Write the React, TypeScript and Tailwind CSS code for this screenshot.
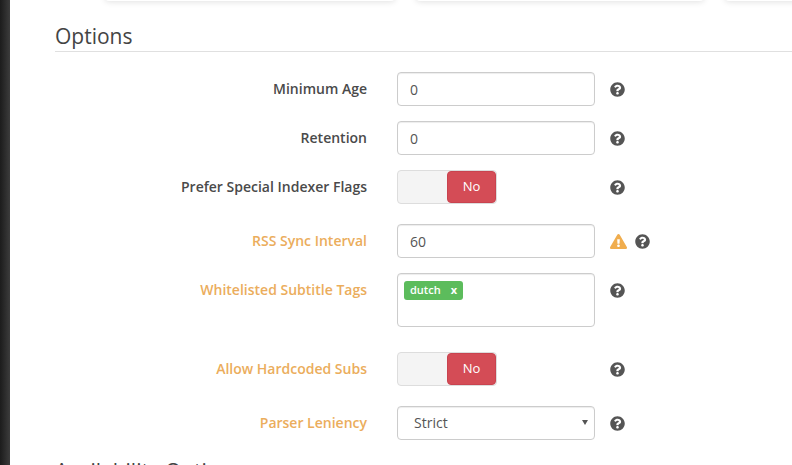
import type { ReactNode } from "react";
import { FaExclamationTriangle, FaQuestionCircle } from "react-icons/fa";

function Help() {
  return <FaQuestionCircle className="text-[15px] text-[#555]" />;
}

function Row({
  label,
  advanced,
  className,
  children,
  warning,
}: {
  label: string;
  advanced?: boolean;
  className?: string;
  children: ReactNode;
  warning?: boolean;
}) {
  return (
    <div className={`flex items-start ${className ?? ""}`}>
      <label
        className={`w-[312px] shrink-0 pt-[7px] text-right text-[14px] leading-[20px] font-[590] ${
          advanced ? "text-[#ebad5c]" : "text-[#4a4a4a]"
        }`}
      >
        {label}
      </label>
      <div className="ml-[30px] w-[198px] shrink-0">{children}</div>
      <div className="ml-[15px] flex h-[34px] items-center gap-[8px]">
        {warning && <FaExclamationTriangle className="text-[17px] text-[#f0ad4e]" />}
        <Help />
      </div>
    </div>
  );
}

function TextBox({ value }: { value: string }) {
  return (
    <div className="h-[34px] rounded-[4px] border border-[#ccc] bg-white px-3 pt-[7px] text-[14px] leading-[20px] text-[#555] shadow-[inset_0_1px_1px_rgba(0,0,0,0.075)]">
      {value}
    </div>
  );
}

function Toggle() {
  return (
    <div className="flex h-[34px] w-[100px] rounded-[4px] border border-[#ddd] bg-[#f4f4f4]">
      <div className="w-[49px]" />
      <div className="-my-px flex h-[32px] w-[49px] translate-y-px items-center justify-center rounded-[4px] border border-[#c9434f] bg-[#d44c56] pb-px text-[13px] text-white">
        No
      </div>
    </div>
  );
}

export default function App() {
  return (
    <div className="flex h-[465px] w-[792px] overflow-hidden bg-white font-['Open_Sans',sans-serif]">
      <div className="h-full w-[10px] shrink-0 bg-gradient-to-r from-[#1c1c1c] to-[#3c3c3c]" />
      <main className="min-w-0 flex-1 pl-[45px]">
        <div className="-mt-[10px] ml-[50px] flex gap-[21px]">
          <div className="h-[11px] w-[290px] shrink-0 rounded-[4px] bg-white shadow-[0_1px_6px_rgba(0,0,0,0.12)]" />
          <div className="h-[11px] w-[288px] shrink-0 rounded-[4px] bg-white shadow-[0_1px_6px_rgba(0,0,0,0.12)]" />
          <div className="h-[11px] w-[100px] shrink-0 rounded-[4px] bg-white shadow-[0_1px_6px_rgba(0,0,0,0.12)]" />
        </div>
        <h2 className="mt-[20px] h-[31px] border-b border-[#e0e0e0] text-[21px] leading-[30px] text-[#444]">
          Options
        </h2>
        <Row label="Minimum Age" className="mt-[20px]">
          <TextBox value="0" />
        </Row>
        <Row label="Retention" className="mt-[15px]">
          <TextBox value="0" />
        </Row>
        <Row label="Prefer Special Indexer Flags" className="mt-[15px]">
          <Toggle />
        </Row>
        <Row label="RSS Sync Interval" advanced warning className="mt-[20px]">
          <TextBox value="60" />
        </Row>
        <Row label="Whitelisted Subtitle Tags" advanced className="mt-[15px]">
          <div className="flex h-[54px] items-start rounded-[4px] border border-[#ccc] bg-white pt-[7px] pl-[6px] shadow-[inset_0_1px_1px_rgba(0,0,0,0.075)]">
            <span className="flex h-[19px] w-[59px] items-center justify-between rounded-[3px] bg-[#5cbc5c] px-[6px] pb-px text-[11px] leading-[18px] font-semibold text-white">
              <span>dutch</span>
              <span className="font-bold">x</span>
            </span>
          </div>
        </Row>
        <Row label="Allow Hardcoded Subs" advanced className="mt-[25px]">
          <Toggle />
        </Row>
        <Row label="Parser Leniency" advanced className="mt-[20px]">
          <div className="relative">
            <TextBox value="" />
            <span className="absolute top-[7px] left-[17px] text-[14px] leading-[20px] text-[#555]">Strict</span>
            <span className="absolute top-[14px] right-[7px] h-0 w-0 border-x-[3px] border-t-[5px] border-x-transparent border-t-[#555]" />
          </div>
        </Row>
        <h2 className="mt-[16px] text-[21px] leading-[30px] text-[#444]">Availability Options</h2>
      </main>
    </div>
  );
}
